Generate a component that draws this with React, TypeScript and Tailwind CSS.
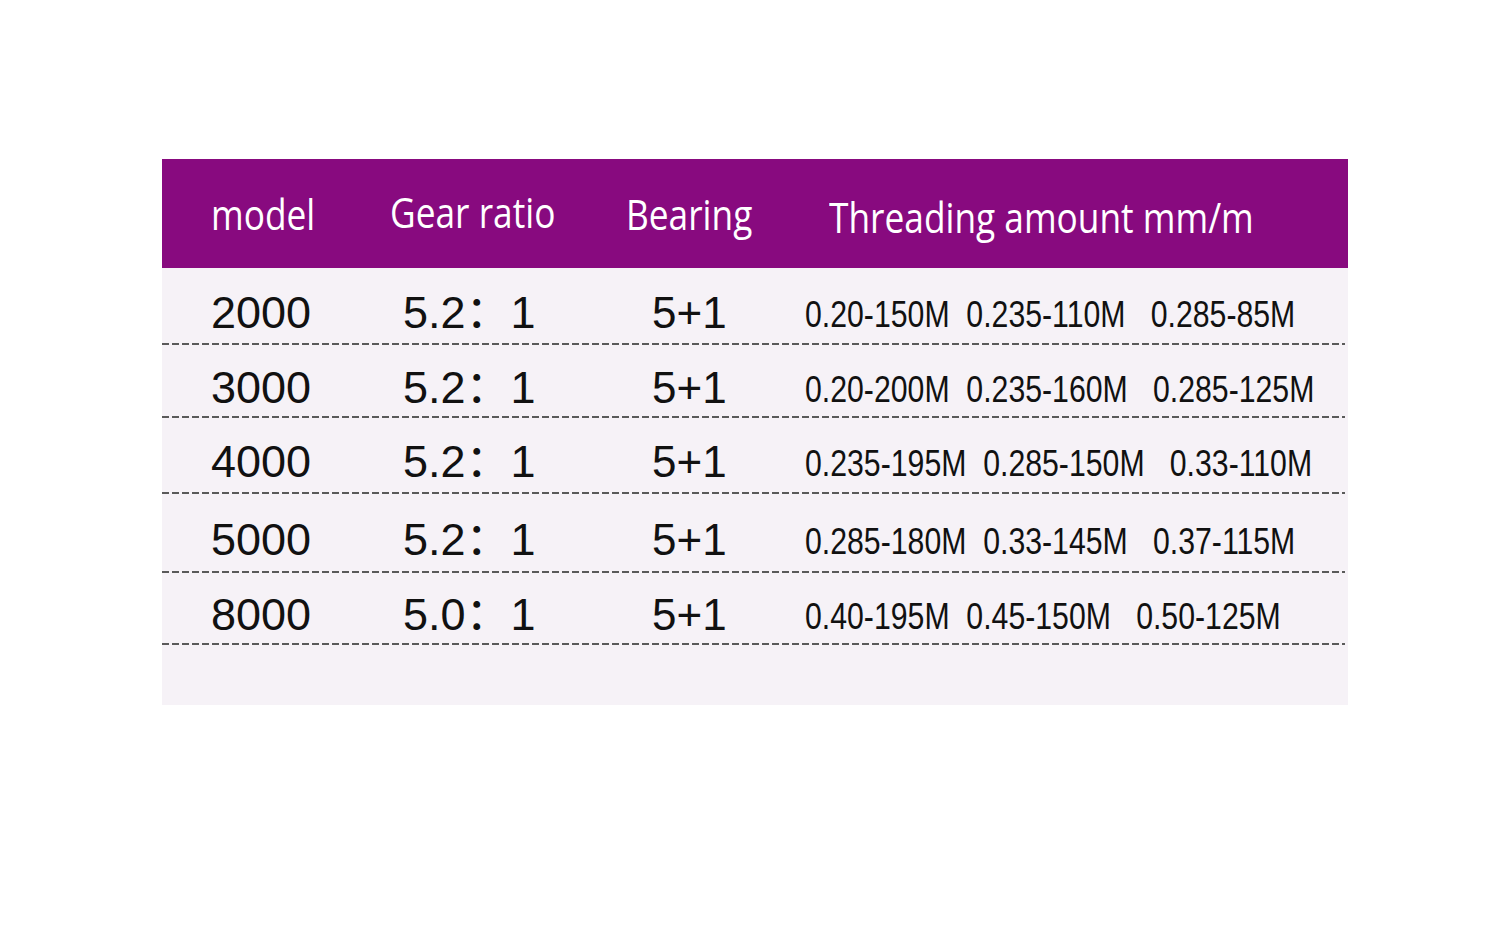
const rows = [
  { model: "2000", ratio: "5.2", a: "0.20-150M", b: "0.235-110M", c: "0.285-85M", h: "h-[75px]" },
  { model: "3000", ratio: "5.2", a: "0.20-200M", b: "0.235-160M", c: "0.285-125M", h: "h-[71px]" },
  { model: "4000", ratio: "5.2", a: "0.235-195M", b: "0.285-150M", c: "0.33-110M", h: "h-[74px]" },
  { model: "5000", ratio: "5.2", a: "0.285-180M", b: "0.33-145M", c: "0.37-115M", h: "h-[77px]" },
  { model: "8000", ratio: "5.0", a: "0.40-195M", b: "0.45-150M", c: "0.50-125M", h: "h-[70px]" },
];

function Dashed() {
  return (
    <div className="h-[2px] w-[1183px] bg-[repeating-linear-gradient(to_right,#5a5a5a_0_7px,transparent_7px_10px)]" />
  );
}

export default function App() {
  return (
    <div className="min-h-screen bg-white pt-[159px] pl-[162px]">
      <div className="w-[1186px] bg-[#f6f2f7]">
        {/* header */}
        <div className="flex h-[109px] items-center bg-[#880a7f] font-['Open_Sans',sans-serif] text-[42px] font-medium text-white">
          <div className="w-[208px] shrink-0 pl-[49px]">
            <span className="inline-block origin-left scale-x-[0.84]">model</span>
          </div>
          <div className="w-[220px] shrink-0 pl-[20px] -mt-[4px]">
            <span className="inline-block origin-left scale-x-[0.84]">Gear ratio</span>
          </div>
          <div className="w-[200px] shrink-0 pl-[36px]">
            <span className="inline-block origin-left scale-x-[0.84]">Bearing</span>
          </div>
          <div className="min-w-0 flex-1 pl-[39px] pt-[6px]">
            <span className="inline-block origin-left scale-x-[0.84] whitespace-nowrap">Threading amount mm/m</span>
          </div>
        </div>

        {/* rows */}
        {rows.map((r) => (
          <div key={r.model}>
            <div className={`flex items-center pt-[14px] font-['Liberation_Sans',Arial,sans-serif] text-[#111] ${r.h}`}>
              <div className="w-[208px] shrink-0 pl-[49px] text-[45px]">{r.model}</div>
              <div className="w-[220px] shrink-0 pl-[33px] font-['Liberation_Sans','Noto_Sans_CJK_SC',sans-serif] text-[45px]">
                {r.ratio}：1
              </div>
              <div className="w-[200px] shrink-0 pl-[62px] text-[44px]">5+1</div>
              <div className="min-w-0 flex-1 pl-[15px] pt-[4px] text-[36px]">
                <span className="inline-block origin-left scale-x-[0.84] whitespace-pre">
                  {r.a + "  " + r.b + "   " + r.c}
                </span>
              </div>
            </div>
            <Dashed />
          </div>
        ))}
        <div className="h-[60px]" />
      </div>
    </div>
  );
}
